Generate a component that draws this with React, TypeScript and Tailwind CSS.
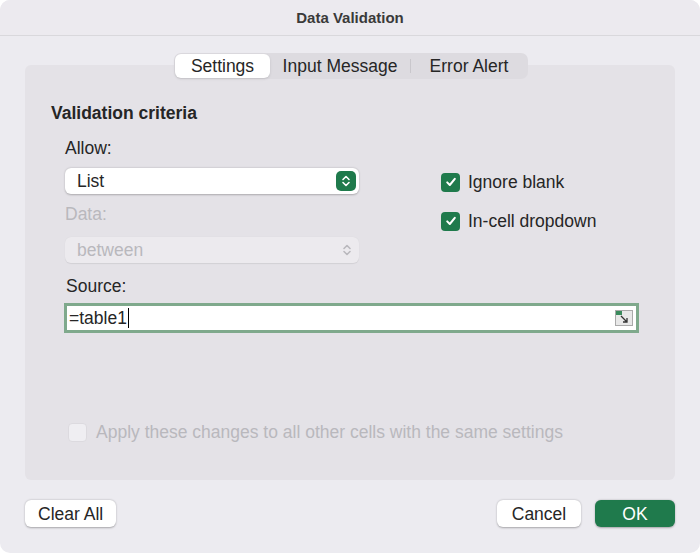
import { useState } from 'react';

const Check = ({ on, disabled }: { on: boolean; disabled?: boolean }) => (
  <span
    className={
      on
        ? 'flex h-[19px] w-[19px] items-center justify-center rounded-[4px] bg-[#1f7a4c]'
        : 'flex h-[19px] w-[19px] items-center justify-center rounded-[4px] border border-[#dcdadf] bg-[#efeef2]'
    }
  >
    {on && !disabled && (
      <svg width="12" height="12" viewBox="0 0 12 12">
        <path d="M2.2 6.4 4.8 9 9.8 2.8" fill="none" stroke="white" strokeWidth="2" strokeLinecap="round" strokeLinejoin="round" />
      </svg>
    )}
  </span>
);

const Updown = ({ color }: { color: string }) => (
  <svg width="10" height="14" viewBox="0 0 10 14">
    <path d="M2 5.5 5 2.5 8 5.5M2 8.5 5 11.5 8 8.5" fill="none" stroke={color} strokeWidth="1.6" strokeLinecap="round" strokeLinejoin="round" />
  </svg>
);

export default function App() {
  const [ignore, setIgnore] = useState(true);
  const [dropdown, setDropdown] = useState(true);

  return (
    <div className="flex h-[553px] w-[700px] flex-col overflow-hidden rounded-[10px] bg-[#ecebf0] text-[17.5px] leading-[24px] text-[#262626]" style={{ fontFamily: '"Liberation Sans", Roboto, sans-serif' }}>
      <div className="flex h-[36px] shrink-0 items-center justify-center border-b border-[#d9d8dc] bg-[#eceaef] text-[15px] font-bold text-[#3a3a3a]">
        Data Validation
      </div>

      <div className="relative mx-[25px] mt-[29px] h-[415px] rounded-[6px] bg-[#e4e2e7] px-[26px] pt-[36px]">
        <div className="absolute left-[149px] top-[-12px] flex h-[26px] items-center rounded-[7px] bg-[#dddbe0] p-[1px]">
          <div className="flex h-full w-[95px] items-center justify-center rounded-[6px] bg-white shadow-sm">Settings</div>
          <div className="flex w-[140px] items-center justify-center">Input Message</div>
          <div className="h-[14px] w-px bg-[#c9c7cc]" />
          <div className="flex w-[116px] items-center justify-center">Error Alert</div>
        </div>

        <div className="font-bold text-[#262626]">Validation criteria</div>

        <div className="flex">
          <div className="ml-[14px] w-[294px]">
            <div className="mt-[11px]">Allow:</div>
            <div className="mt-[8px] flex h-[26px] items-center justify-between rounded-[6px] bg-white pl-[12px] pr-[3px] shadow-[0_0.5px_2px_rgba(0,0,0,0.25)]">
              <span>List</span>
              <span className="flex h-[20px] w-[20px] items-center justify-center rounded-[5px] bg-[#1f7a4c]">
                <Updown color="white" />
              </span>
            </div>
            <div className="mt-[8px] text-[#b9b8bd]">Data:</div>
            <div className="mt-[11px] flex h-[26px] items-center justify-between rounded-[6px] bg-[#eceaee] pl-[12px] pr-[7px] text-[#b9b8bd] shadow-[0_0.5px_1px_rgba(0,0,0,0.08)]">
              <span>between</span>
              <Updown color="#b9b8bd" />
            </div>
          </div>
          <div className="ml-[82px] mt-[45px] flex flex-col gap-[15px]">
            <label className="flex items-center gap-[8px]" onClick={() => setIgnore(!ignore)}>
              <Check on={ignore} /> Ignore blank
            </label>
            <label className="flex items-center gap-[8px]" onClick={() => setDropdown(!dropdown)}>
              <Check on={dropdown} /> In-cell dropdown
            </label>
          </div>
        </div>

        <div className="ml-[15px] mt-[11px]">Source:</div>
        <div className="ml-[13px] mt-[5px] flex h-[30px] w-[575px] items-center justify-between border-[3px] border-[#7fa98c] bg-white pl-[2px] pr-[3px]">
          <span className="flex items-center">=table1<span className="ml-[1px] h-[20px] w-px bg-black" /></span>
          <svg width="18" height="16" viewBox="0 0 18 16">
            <rect x="0.5" y="0.5" width="17" height="15" fill="#e8e8e8" stroke="#aaa" />
            <rect x="1" y="1" width="6" height="4" fill="#3a8a5c" />
            <path d="M6 6 12 12M12 8v4H8" fill="none" stroke="#333" strokeWidth="1.3" />
          </svg>
        </div>

        <div className="ml-[17px] mt-[87px] flex items-center gap-[9px] text-[#b9b8bd]">
          <Check on={false} disabled />
          Apply these changes to all other cells with the same settings
        </div>
      </div>

      <div className="mx-[25px] mt-[20px] flex items-center">
        <button className="h-[27px] rounded-[6px] bg-white px-[13px] shadow-[0_0.5px_2px_rgba(0,0,0,0.3)]">Clear All</button>
        <div className="flex-1" />
        <button className="h-[27px] w-[84px] rounded-[6px] bg-white shadow-[0_0.5px_2px_rgba(0,0,0,0.3)]">Cancel</button>
        <button className="ml-[14px] h-[27px] w-[80px] rounded-[6px] bg-[#1f7a4c] text-white shadow-[0_0.5px_2px_rgba(0,0,0,0.3)]">OK</button>
      </div>
    </div>
  );
}
